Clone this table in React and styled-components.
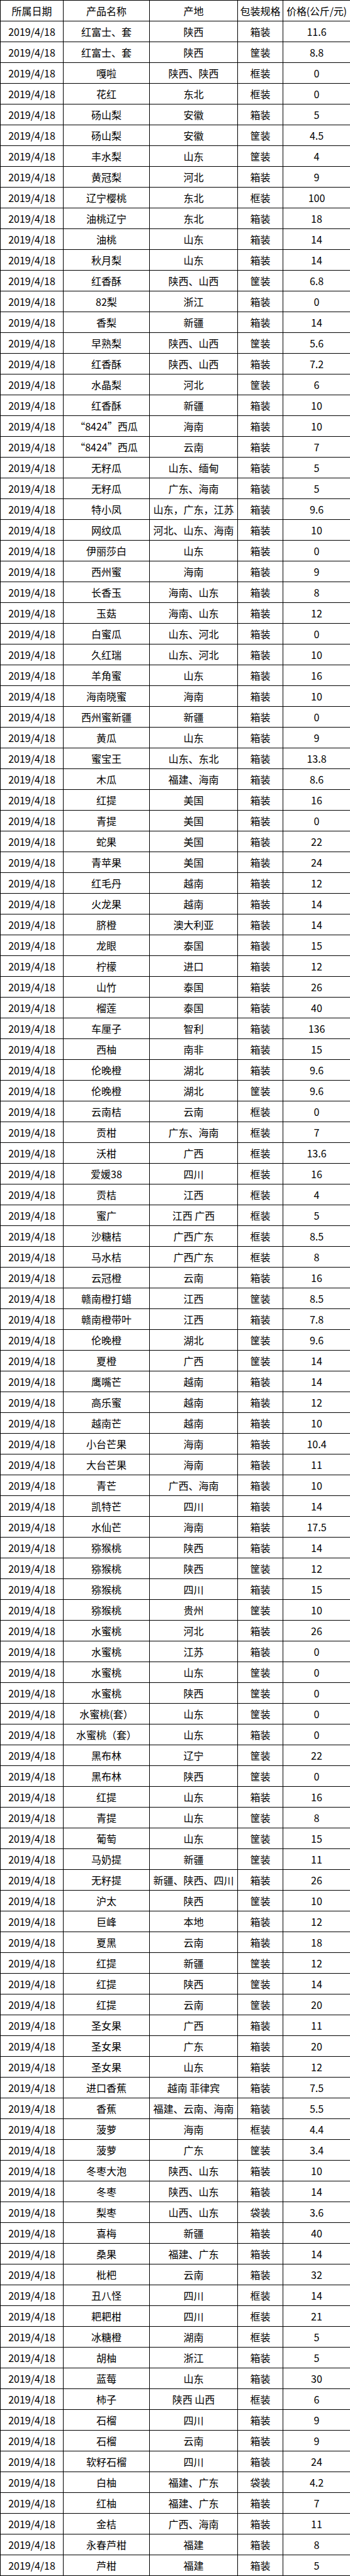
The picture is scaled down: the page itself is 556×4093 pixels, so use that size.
import React from 'react';
import styled, { createGlobalStyle } from 'styled-components';

const GlobalStyle = createGlobalStyle`
  html, body {
    margin: 0;
    padding: 0;
    background: #fff;
  }
  body {
    font-family: "Noto Sans CJK SC", "Noto Sans", sans-serif;
  }
`;

// 日期 | 产品名称 | 产地 | 包装规格 | 价格
const rows = `
红富士、套|陕西|箱装|11.6
红富士、套|陕西|筐装|8.8
嘎啦|陕西、陕西|框装|0
花红|东北|框装|0
砀山梨|安徽|箱装|5
砀山梨|安徽|筐装|4.5
丰水梨|山东|筐装|4
黄冠梨|河北|箱装|9
辽宁樱桃|东北|框装|100
油桃辽宁|东北|箱装|18
油桃|山东|箱装|14
秋月梨|山东|箱装|14
红香酥|陕西、山西|筐装|6.8
82梨|浙江|箱装|0
香梨|新疆|箱装|14
早熟梨|陕西、山西|筐装|5.6
红香酥|陕西、山西|箱装|7.2
水晶梨|河北|筐装|6
红香酥|新疆|箱装|10
“8424”西瓜|海南|箱装|10
“8424”西瓜|云南|箱装|7
无籽瓜|山东、缅甸|箱装|5
无籽瓜|广东、海南|箱装|5
特小凤|山东，广东，江苏|箱装|9.6
网纹瓜|河北、山东、海南|箱装|10
伊丽莎白|山东|箱装|0
西州蜜|海南|箱装|9
长香玉|海南、山东|箱装|8
玉菇|海南、山东|箱装|12
白蜜瓜|山东、河北|箱装|0
久红瑞|山东、河北|箱装|10
羊角蜜|山东|箱装|16
海南晓蜜|海南|箱装|10
西州蜜新疆|新疆|箱装|0
黄瓜|山东|箱装|9
蜜宝王|山东、东北|箱装|13.8
木瓜|福建、海南|箱装|8.6
红提|美国|箱装|16
青提|美国|箱装|0
蛇果|美国|箱装|22
青苹果|美国|箱装|24
红毛丹|越南|箱装|12
火龙果|越南|箱装|14
脐橙|澳大利亚|箱装|14
龙眼|泰国|箱装|15
柠檬|进口|箱装|12
山竹|泰国|箱装|26
榴莲|泰国|箱装|40
车厘子|智利|箱装|136
西柚|南非|箱装|15
伦晚橙|湖北|箱装|9.6
伦晚橙|湖北|筐装|9.6
云南桔|云南|框装|0
贡柑|广东、海南|框装|7
沃柑|广西|框装|13.6
爱媛38|四川|框装|16
贡桔|江西|框装|4
蜜广|江西 广西|框装|5
沙糖桔|广西广东|框装|8.5
马水桔|广西广东|框装|8
云冠橙|云南|箱装|16
赣南橙打蜡|江西|筐装|8.5
赣南橙带叶|江西|箱装|7.8
伦晚橙|湖北|筐装|9.6
夏橙|广西|筐装|14
鹰嘴芒|越南|箱装|14
高乐蜜|越南|箱装|12
越南芒|越南|箱装|10
小台芒果|海南|箱装|10.4
大台芒果|海南|箱装|11
青芒|广西、海南|箱装|10
凯特芒|四川|箱装|14
水仙芒|海南|箱装|17.5
猕猴桃|陕西|箱装|14
猕猴桃|陕西|筐装|12
猕猴桃|四川|箱装|15
猕猴桃|贵州|筐装|10
水蜜桃|河北|箱装|26
水蜜桃|江苏|箱装|0
水蜜桃|山东|筐装|0
水蜜桃|陕西|筐装|0
水蜜桃(套）|山东|筐装|0
水蜜桃（套）|山东|箱装|0
黑布林|辽宁|筐装|22
黑布林|陕西|筐装|0
红提|山东|箱装|16
青提|山东|筐装|8
葡萄|山东|筐装|15
马奶提|新疆|筐装|11
无籽提|新疆、陕西、四川|箱装|26
沪太|陕西|筐装|10
巨峰|本地|箱装|12
夏黑|云南|箱装|18
红提|新疆|筐装|12
红提|陕西|筐装|14
红提|云南|筐装|20
圣女果|广西|箱装|11
圣女果|广东|箱装|20
圣女果|山东|箱装|12
进口香蕉|越南 菲律宾|箱装|7.5
香蕉|福建、云南、海南|箱装|5.5
菠萝|海南|框装|4.4
菠萝|广东|筐装|3.4
冬枣大泡|陕西、山东|箱装|10
冬枣|陕西、山东|箱装|14
梨枣|山西、山东|袋装|3.6
喜梅|新疆|箱装|40
桑果|福建、广东|箱装|14
枇杷|云南|箱装|32
丑八怪|四川|框装|14
耙耙柑|四川|框装|21
冰糖橙|湖南|框装|5
胡柚|浙江|箱装|5
蓝莓|山东|箱装|30
柿子|陕西 山西|框装|6
石榴|四川|箱装|9
石榴|云南|箱装|9
软籽石榴|四川|箱装|24
白柚|福建、广东|袋装|4.2
红柚|福建、广东|箱装|7
金桔|广西、海南|箱装|11
永春芦柑|福建|箱装|8
芦柑|福建|箱装|5
`
  .trim()
  .split('\n')
  .map((line) => ['2019/4/18', ...line.split('|')]);

const headers = ['所属日期', '产品名称', '产地', '包装规格', '价格(公斤/元)'];
const colWidths = [100, 137, 140, 72, 107];

const Sheet = styled.table`
  width: 556px;
  table-layout: fixed;
  border-collapse: collapse;
  color: #000;
  font-size: 16px;
`;

const Cell = styled.td`
  height: 32px;
  padding: 0;
  border: 1px solid #000;
  text-align: center;
  vertical-align: middle;
  line-height: 32px;
  white-space: nowrap;
  overflow: hidden;
  letter-spacing: ${(p) => (p.$tight ? '-0.2px' : '0')};
`;

const HeadCell = styled(Cell).attrs({ as: 'th' })`
  font-weight: normal;
`;

export default function App() {
  return (
    <>
      <GlobalStyle />
      <Sheet>
        <colgroup>
          {colWidths.map((w, i) => (
            <col key={i} style={{ width: w }} />
          ))}
        </colgroup>
        <thead>
          <tr>
            {headers.map((h, i) => (
              <HeadCell key={h} $tight={i === 4}>
                {h}
              </HeadCell>
            ))}
          </tr>
        </thead>
        <tbody>
          {rows.map((r, ri) => (
            <tr key={ri}>
              {r.map((v, ci) => (
                <Cell key={ci}>{v}</Cell>
              ))}
            </tr>
          ))}
        </tbody>
      </Sheet>
    </>
  );
}
